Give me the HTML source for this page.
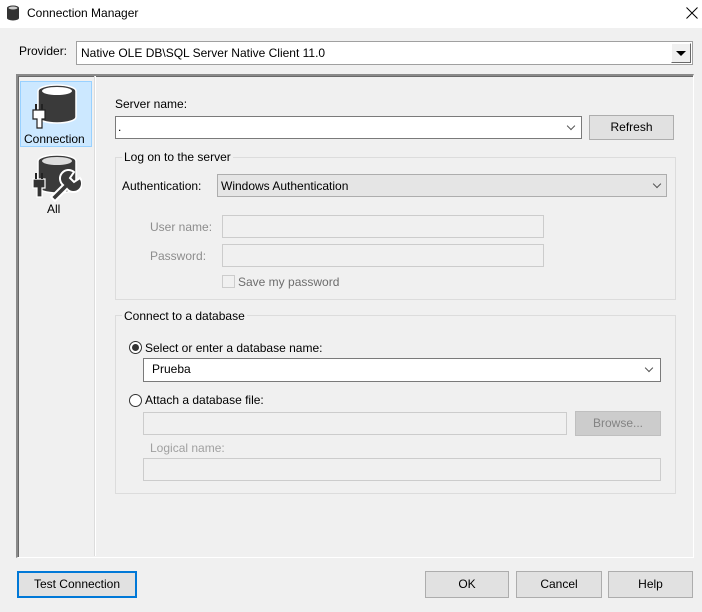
<!DOCTYPE html>
<html><head><meta charset="utf-8"><style>
*{margin:0;padding:0;box-sizing:border-box}
body{width:702px;height:612px;background:#f0f0f0;font-family:"Liberation Sans",sans-serif;font-size:12px;color:#000;position:relative;overflow:hidden}
.a{position:absolute}
.t{position:absolute;white-space:nowrap;line-height:14px}
.box{position:absolute;background:#fff;border:1px solid #7a7a7a}
.dis{position:absolute;background:#f0f0f0;border:1px solid #ccc}
.btn{position:absolute;background:#e1e1e1;border:1px solid #adadad;text-align:center;line-height:23px}
.grp{position:absolute;border:1px solid #dcdcdc}
.gl{position:absolute;background:#f0f0f0;padding:0 2px;line-height:14px;white-space:nowrap}
.chev{position:absolute;width:6px;height:6px;border-right:1px solid #555;border-bottom:1px solid #555;transform:rotate(45deg)}
.g{color:#8d8d8d}
</style></head><body>
<div class="a" style="left:0;top:0;width:702px;height:28px;background:#fff"></div>
<svg class="a" style="left:6px;top:5px" width="14" height="16" viewBox="0 0 14 16"><ellipse cx="7" cy="3" rx="6" ry="2.5" fill="#333"/><rect x="1" y="3" width="12" height="10" fill="#333"/><ellipse cx="7" cy="13" rx="6" ry="2.5" fill="#333"/><ellipse cx="7" cy="3" rx="4.5" ry="1.5" fill="#ccc"/></svg>
<div class="t" style="left:27px;top:6px">Connection Manager</div>
<svg class="a" style="left:686px;top:7px" width="12" height="12" viewBox="0 0 12 12"><path d="M0.5 0.5 L11.5 11.5 M11.5 0.5 L0.5 11.5" stroke="#000" stroke-width="1"/></svg>

<div class="t" style="left:19px;top:44px">Provider:</div>
<div class="box" style="left:76px;top:41px;width:617px;height:24px;border-color:#a0a0a0"></div>
<div class="t" style="left:81px;top:46px">Native OLE DB\SQL Server Native Client 11.0</div>
<div class="a" style="left:671px;top:43px;width:20px;height:20px;background:#f0f0f0;border:1px solid;border-color:#fff #696969 #696969 #fff"></div>
<div class="a" style="left:676px;top:51px;border-left:5px solid transparent;border-right:5px solid transparent;border-top:5px solid #000;width:0;height:0"></div>

<div class="a" style="left:16px;top:74px;width:678px;height:484px;border-left:2px solid #8a8a8a;border-top:2px solid #8a8a8a;border-right:1px solid #fff;border-bottom:1px solid #fff;box-shadow:inset 1px 1px 0 #696969"></div>
<div class="a" style="left:94px;top:76px;width:2px;height:480px;background:#fff;border-left:1px solid #dcdcdc"></div>
<div class="a" style="left:20px;top:81px;width:72px;height:66px;background:#cce8ff;border:1px solid #99d1ff"></div>
<svg class="a" style="left:30px;top:83px" width="50" height="48" viewBox="0 0 50 48">
<path d="M8 8 A19 6 0 0 1 46 8 L46 34 A19 6 0 0 1 8 34 Z" fill="#3a3a3a" stroke="#fff" stroke-width="1.5"/>
<ellipse cx="27" cy="8" rx="15" ry="4" fill="#fff"/>
<path d="M3 27 h12 v9 h-3 v9 h-5 v-9 h-4 Z" fill="#fff" stroke="#222" stroke-width="1.2"/>
<rect x="5" y="21" width="2" height="6" fill="#222"/><rect x="11" y="21" width="2" height="6" fill="#222"/>
</svg>
<div class="t" style="left:24px;top:132px">Connection</div>
<svg class="a" style="left:30px;top:153px" width="52" height="50" viewBox="0 0 52 50">
<path d="M8 8 A19 6 0 0 1 46 8 L46 34 A19 6 0 0 1 8 34 Z" fill="#3a3a3a" stroke="#fff" stroke-width="1.5"/>
<ellipse cx="27" cy="8" rx="15" ry="4" fill="#ddd"/>
<path d="M21 44 L33 32 A8 8 0 0 1 44 19 L40 25 L44 29 L50 25 A8 8 0 0 1 37 36 L25 48 Z" fill="#3a3a3a" stroke="#fff" stroke-width="2"/>
<path d="M3 26 h12 v9 h-3 v9 h-5 v-9 h-4 Z" fill="#333" stroke="#fff" stroke-width="1.2"/>
<rect x="5" y="20" width="2" height="6" fill="#222"/><rect x="11" y="20" width="2" height="6" fill="#222"/>
</svg>
<div class="t" style="left:47px;top:202px">All</div>

<div class="t" style="left:115px;top:97px">Server name:</div>
<div class="box" style="left:115px;top:116px;width:467px;height:23px"></div>
<div class="t" style="left:118px;top:120px">.</div>
<div class="chev" style="left:568px;top:123px"></div>
<div class="btn" style="left:589px;top:115px;width:85px;height:25px">Refresh</div>

<div class="grp" style="left:115px;top:157px;width:561px;height:143px"></div>
<div class="gl" style="left:122px;top:150px">Log on to the server</div>
<div class="t" style="left:122px;top:179px">Authentication:</div>
<div class="a" style="left:217px;top:174px;width:450px;height:23px;background:#e5e5e5;border:1px solid #adadad"></div>
<div class="t" style="left:221px;top:179px">Windows Authentication</div>
<div class="chev" style="left:654px;top:181px"></div>
<div class="t g" style="left:150px;top:220px">User name:</div>
<div class="dis" style="left:222px;top:215px;width:322px;height:23px"></div>
<div class="t g" style="left:150px;top:249px">Password:</div>
<div class="dis" style="left:222px;top:244px;width:322px;height:23px"></div>
<div class="a" style="left:222px;top:275px;width:13px;height:13px;border:1px solid #ccc;background:#f0f0f0"></div>
<div class="t" style="left:238px;top:275px;color:#6d6d6d">Save my password</div>

<div class="grp" style="left:115px;top:315px;width:561px;height:179px"></div>
<div class="gl" style="left:122px;top:309px">Connect to a database</div>
<div class="a" style="left:129px;top:341px;width:13px;height:13px;border:1px solid #333;border-radius:50%;background:#fff"></div>
<div class="a" style="left:132px;top:344px;width:7px;height:7px;border-radius:50%;background:#333"></div>
<div class="t" style="left:145px;top:341px">Select or enter a database name:</div>
<div class="box" style="left:143px;top:358px;width:518px;height:24px"></div>
<div class="t" style="left:152px;top:362px">Prueba</div>
<div class="chev" style="left:646px;top:365px"></div>
<div class="a" style="left:129px;top:394px;width:13px;height:13px;border:1px solid #333;border-radius:50%;background:#fff"></div>
<div class="t" style="left:145px;top:393px">Attach a database file:</div>
<div class="dis" style="left:143px;top:412px;width:424px;height:23px"></div>
<div class="a" style="left:575px;top:411px;width:86px;height:25px;background:#ccc;border:1px solid #bfbfbf;color:#838383;text-align:center;line-height:23px">Browse...</div>
<div class="t g" style="left:150px;top:441px;color:#a0a0a0">Logical name:</div>
<div class="dis" style="left:143px;top:458px;width:518px;height:23px"></div>

<div class="btn" style="left:17px;top:571px;width:120px;height:27px;border:2px solid #0078d7;line-height:23px">Test Connection</div>
<div class="btn" style="left:425px;top:571px;width:84px;height:27px;line-height:25px">OK</div>
<div class="btn" style="left:516px;top:571px;width:86px;height:27px;line-height:25px">Cancel</div>
<div class="btn" style="left:608px;top:571px;width:85px;height:27px;line-height:25px">Help</div>
</body></html>
